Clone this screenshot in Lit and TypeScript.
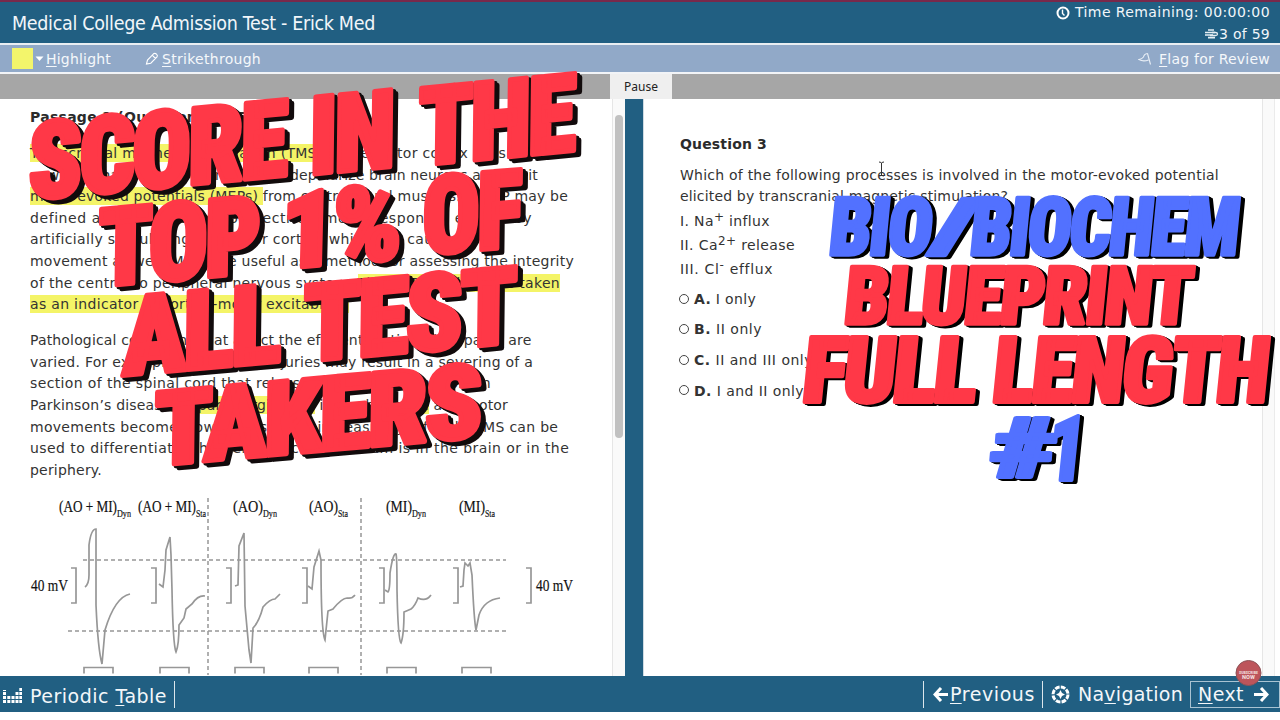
import { LitElement, html, svg, css } from "lit";
import { customElement, property } from "lit/decorators.js";

// One line of text, spaced out to an exact width
@customElement("fit-line")
export class FitLine extends LitElement {
    @property({ type: Number }) width = 0;

    static styles = css`
        :host {
            display: block;
            width: fit-content;
            white-space: nowrap;
        }
    `;

    firstUpdated() {
        const chars = (this.textContent || "").trim().length;
        const natural = this.getBoundingClientRect().width;
        if (this.width && chars) {
            this.style.letterSpacing = `${(this.width - natural) / chars}px`;
        }
    }

    render() {
        return html`<slot></slot>`;
    }
}

// text, left, baseline at left, right, baseline at right, cap height, lean, colour
type Word = [string, number, number, number, number, number, number, string];

const RED = "#ff3847";
const BLUE = "#5271ff";

const SLOGAN: Word[] = [
    ["SCORE", 28, 202, 285, 178, 81, 1, RED],
    ["IN", 309, 177, 392, 169, 82, 1, RED],
    ["THE", 418, 168, 573, 153, 82, 1, RED],
    ["TOP", 98, 289, 258, 275, 82, 1, RED],
    ["1%", 280, 271, 398, 261, 80, 2, RED],
    ["OF", 422, 257, 519, 249, 82, 1, RED],
    ["ALL", 122, 378, 278, 364, 83, 1, RED],
    ["TEST", 303, 364, 514, 345, 81, 1, RED],
    ["TAKERS", 154, 468, 479, 439, 78, 1, RED],
];

const HEADLINE: Word[] = [
    ["BIO", 827, 257, 928, 257, 61, 6, BLUE],
    ["/", 929, 253, 970, 253, 56, 7, BLUE],
    ["BIOCHEM", 968, 257, 1235, 257, 61, 6, BLUE],
    ["BLUEPRINT", 842, 326, 1188, 326, 61, 6, RED],
    ["FULL", 800, 404, 972, 404, 69, 7, RED],
    ["LENGTH", 990, 404, 1264, 404, 69, 7, RED],
    ["#", 988, 479, 1052, 479, 63, 5, BLUE],
    ["1", 1045, 482, 1080, 482, 68, 7, BLUE],
];

const CAP = 71.1;
const STROKE = 4.5;

const TRACES = [
    "M85 587 Q89 584 89 575 L89 545 Q91 529 96 529 L96 605 Q98 650 102 664 L105 630 Q115 597 130 594",
    "M159 584 L163 587 L165 570 L166 550 L170 537 L171 555 L172 590 Q173 645 176 652 Q179 645 179 625 L184 618 L186 609 L192 604 Q198 595 205 596",
    "M235 586 L238 585 L239 546 L244 533 L245 606 L249 650 L251 663 L253 628 Q259 622 263 607 Q270 599 275 599 L280 594",
    "M308 586 L312 589 L314 567 L319 551 L321 560 Q321 632 325 640 L328 611 L333 609 Q342 598 347 598 Q352 599 355 595",
    "M385 590 L388 592 Q390 590 390 573 Q393 553 396 554 Q397 556 397 590 Q398 640 401 643 Q404 635 404 612 L411 609 Q415 606 418 598 Q426 602 431 595",
    "M460 587 L463 586 L464 570 L465 563 L468 566 L470 563 L472 575 Q474 620 476 630 L479 615 Q484 600 500 598",
];

const LABELS: [number, string, string, number][] = [
    [59, "(AO + MI)", "Dyn", 58],
    [138, "(AO + MI)", "Sta", 58],
    [233, "(AO)", "Dyn", 30],
    [309, "(AO)", "Sta", 29],
    [386, "(MI)", "Dyn", 26],
    [459, "(MI)", "Sta", 26],
];

@customElement("app-root")
export class AppRoot extends LitElement {
    static styles = css`
        :host {
            display: flex;
            flex-direction: column;
            position: relative;
            width: 1280px;
            height: 720px;
            overflow: hidden;
            background: #fff;
            color: #333;
            font-family: "DejaVu Sans", Verdana, sans-serif;
            font-size: 14px;
        }

        u {
            text-underline-offset: 2px;
            text-decoration-thickness: 1px;
        }

        svg {
            display: block;
        }

        .header {
            box-sizing: border-box;
            height: 45px;
            display: flex;
            justify-content: space-between;
            padding: 0 10px 0 12px;
            background: #215f82;
            border-top: 2px solid #78294b;
            border-bottom: 2px solid #e9eef2;
            color: #f1f6fa;
        }

        .title {
            font-family: "DejaVu Sans Condensed", "DejaVu Sans", sans-serif;
            font-stretch: condensed;
            font-size: 19.5px;
            line-height: 44px;
        }

        .status {
            display: flex;
            flex-direction: column;
            align-items: flex-end;
            font-size: 14px;
            line-height: 21.5px;
        }

        .status div,
        .tools div,
        .footer div {
            display: flex;
            align-items: center;
        }

        .tools {
            box-sizing: border-box;
            height: 29px;
            display: flex;
            align-items: center;
            padding: 0 10px 0 12px;
            background: #91a9c8;
            border-bottom: 2px solid #f2f4f7;
            color: #f5f8fb;
        }

        .swatch {
            width: 21px;
            height: 21px;
            background: #f3f56b;
        }

        .strike {
            margin-left: 34px;
            gap: 3px;
        }

        .flag {
            margin-left: auto;
            gap: 7px;
        }

        .pausebar {
            height: 25px;
            display: flex;
            background: #a6a6a6;
        }

        .pause {
            display: flex;
            align-items: center;
            justify-content: center;
            width: 62px;
            margin-left: 610px;
            background: #efefef;
            color: #222;
            font-family: "Noto Sans", sans-serif;
            font-size: 12px;
        }

        .main {
            display: flex;
            height: 577px;
        }

        .passage {
            box-sizing: border-box;
            width: 612px;
            padding: 8px 0 0 30px;
            overflow: hidden;
            line-height: 21.6px;
        }

        .passage h3,
        .question h3 {
            margin: 0;
            font-size: 14px;
            line-height: 21px;
            color: #2b2b2b;
        }

        .para {
            margin-top: 15px;
        }

        .para + .para {
            margin-top: 14.5px;
        }

        mark {
            background: #f4f467;
            color: inherit;
            padding: 1px 0;
        }

        .figure {
            margin: 8.5px 0 0 -30px;
        }

        .figure path {
            fill: none;
            stroke: #979797;
            stroke-width: 1.7;
        }

        .figure .dash {
            stroke-dasharray: 4 3;
            stroke-width: 1.5;
        }

        .figure text {
            font-family: "Liberation Serif", serif;
            font-size: 17.5px;
            fill: #111;
            stroke: #111;
            stroke-width: 0.2px;
        }

        .figure .sub {
            font-size: 11px;
        }

        .track {
            box-sizing: border-box;
            width: 13px;
            padding: 16px 2px 0 2px;
            background: #fafafa;
            border-left: 1px solid #e6e6e6;
        }

        .thumb {
            width: 8px;
            height: 323px;
            border-radius: 4px;
            background: #c1c1c1;
        }

        .divider {
            width: 18px;
            background: #215f82;
            border-right: 1px solid #cfdbe3;
        }

        .question {
            flex: 1;
            padding: 35px 0 0 36px;
            line-height: 21.6px;
        }

        .stem {
            margin-top: 9.5px;
        }

        .roman {
            margin-top: 1px;
            line-height: 24.2px;
        }

        .roman sup {
            font-size: 12px;
            line-height: 0;
            vertical-align: 5px;
        }

        .choices {
            display: grid;
            grid-auto-rows: 30.6px;
            margin-top: 3px;
        }

        .choice {
            display: flex;
            align-items: center;
            gap: 5px;
            margin-left: -1px;
        }

        .radio {
            box-sizing: border-box;
            width: 10px;
            height: 10px;
            margin-top: -2px;
            border: 1.3px solid #444;
            border-radius: 50%;
        }

        .right {
            width: 13px;
            box-sizing: border-box;
            border-right: 1px solid #ebebeb;
            margin-right: 5px;
        }

        .footer {
            display: flex;
            align-items: center;
            height: 36px;
            background: #215f82;
            color: #f3f7fa;
            font-size: 19px;
        }

        .periodic {
            gap: 8px;
            height: 27px;
            padding: 3px 7px 0 3px;
            box-sizing: border-box;
            border-right: 1.5px solid #dce6ec;
        }

        .prev,
        .nav,
        .next {
            box-sizing: border-box;
            height: 27px;
            border-left: 1.5px solid #dce6ec;
        }

        .footer .prev {
            margin-left: auto;
            padding: 0 7px 0 9px;
            gap: 2px;
        }

        .nav {
            padding-left: 8px;
            gap: 8px;
        }

        .footer .next {
            width: 90px;
            margin-left: 7px;
            padding-left: 7px;
            gap: 10px;
            border: 1.5px solid #a9c3d2;
        }

        .overlay {
            position: absolute;
            left: 0;
            top: 0;
        }

        .overlay text {
            font-family: "Roboto", "Inter", sans-serif;
            font-stretch: condensed;
            font-weight: 900;
            font-size: 100px;
            letter-spacing: -3px;
            stroke-width: 4.5px;
            stroke-linejoin: round;
        }

        .slogan {
            filter: drop-shadow(3px 2px 0 #120b0c) drop-shadow(2px 2px 0 #120b0c);
        }

        .headline {
            filter: drop-shadow(2px 1.5px 0 #000) drop-shadow(2px 1.5px 0 #000);
        }

        .overlay .badge {
            font-size: 6px;
            font-weight: 700;
            letter-spacing: 0;
            fill: #f0dcdc;
            stroke: none;
        }

        .overlay .small {
            font-size: 4px;
        }
    `;

    private word([text, x1, y1, x2, y2, cap, lean, color]: Word) {
        const w = x2 - x1;
        const full = CAP + STROKE;
        const m = [1, (y2 - y1) / w, -lean / full, cap / full, x1, y1];
        return svg`<text transform="matrix(${m.join(" ")})" y=${-STROKE / 2} textLength=${w}
            lengthAdjust="spacingAndGlyphs" fill=${color} stroke=${color}>${text}</text>`;
    }

    private figure() {
        return html`
        <svg class="figure" width="612" height="186" viewBox="0 490 612 186">
            <path class="dash" d="M83 560H506 M68 631H506 M208 498V675 M361 498V675"></path>
            ${TRACES.map((d) => svg`<path d=${d}></path>`)}
            ${[71, 151, 226, 302, 379, 453, 526].map((x) => svg`<path d="M${x} 568h5v35h-5"></path>`)}
            ${[84, 160, 235, 309, 387, 462].map((x) => svg`<path d="M${x} 673.5v-6h29v6"></path>`)}
            ${LABELS.map(([x, main, sub, w]) => svg`
                <text x=${x} y="512" textLength=${w} lengthAdjust="spacingAndGlyphs">${main}</text>
                <text class="sub" x=${x + w} y="516.5" textLength=${sub === "Dyn" ? 14 : 10} lengthAdjust="spacingAndGlyphs">${sub}</text>`)}
            <text x="31" y="591" textLength="37" lengthAdjust="spacingAndGlyphs">40 mV</text>
            <text x="536" y="591" textLength="37" lengthAdjust="spacingAndGlyphs">40 mV</text>
        </svg>`;
    }

    private choice(letter: string, text: string, width: number) {
        return html`
        <div class="choice">
            <span class="radio"></span>
            <fit-line width=${width}><b>${letter}.</b> ${text}</fit-line>
        </div>`;
    }

    render() {
        return html`
        <div class="header">
            <fit-line class="title" width="363">Medical College Admission Test - Erick Med</fit-line>
            <div class="status">
                <div>
                    <svg width="19" height="14" viewBox="0 0 19 14" fill="none" stroke="#fff">
                        <circle cx="7" cy="7" r="5.5" stroke-width="2"></circle>
                        <path d="M6.5 3.5V7.5L8.5 9.5" stroke-width="1.4"></path>
                    </svg>
                    <fit-line width="195">Time Remaining: 00:00:00</fit-line>
                </div>
                <div>
                    <svg width="15" height="12" viewBox="0 0 15 12" fill="none" stroke="#e6eef3">
                        <path d="M4 2H10 M1 4.5H11 M1 7H9 M4 9.7H11" stroke-width="1.7"></path>
                        <path d="M8 4.5H11.5Q13.5 4.5 13.5 6T11.5 7.5H6" stroke-width="1.3"></path>
                    </svg>
                    <fit-line width="51">3 of 59</fit-line>
                </div>
            </div>
        </div>
        <div class="tools">
            <div>
                <span class="swatch"></span>
                <svg width="13" height="8" viewBox="0 0 13 8"><path d="M2.5 1.5H10.5L6.5 6Z" fill="#fff"></path></svg>
                <fit-line width="65"><u>H</u>ighlight</fit-line>
            </div>
            <div class="strike">
                <svg width="14" height="14" viewBox="0 0 14 14" fill="none" stroke="#fff" stroke-width="1.1">
                    <path d="M1.5 12L2.5 8L8.5 1.8Q10 .8 11.5 2.2T12 5L5.8 11.2Z M7.2 3.2L10.5 6.500"></path>
                </svg>
                <fit-line width="99"><u>S</u>trikethrough</fit-line>
            </div>
            <div class="flag">
                <svg width="14" height="14" viewBox="0 0 14 14" fill="none" stroke="#e9eff6" stroke-width="1.1">
                    <path d="M9.5 1.5L12.5 12.5 M9.5 1.5Q6 2 5.5 5Q4 7 1 7.5Q5 10 10.5 8"></path>
                </svg>
                <fit-line width="111"><u>F</u>lag for Review</fit-line>
            </div>
        </div>
        <div class="pausebar"><div class="pause">Pause</div></div>
        <div class="main">
            <div class="passage">
                <h3><fit-line width="224">Passage 1 (Questions 1 - 5)</fit-line></h3>
                <div class="para">
                    <fit-line width="476"><mark>Transcranial magnetic stimulation (TMS)</mark> of the motor cortex uses</fit-line>
                    <fit-line width="508">powerful magnetic fields in order to depolarize brain neurons and elicit</fit-line>
                    <fit-line width="538"><mark>motor-evoked potentials (MEPs) </mark>from contralateral muscles. A MEP may be</fit-line>
                    <fit-line width="502">defined as the magnitude of electrical motor responses evoked by</fit-line>
                    <fit-line width="420">artificially stimulating the motor cortex, which can cause</fit-line>
                    <fit-line width="544">movement as well. MEPs are useful as a method for assessing the integrity</fit-line>
                    <fit-line width="530">of the central to peripheral nervous system. <mark>The MEP amplitude is taken</mark></fit-line>
                    <fit-line width="319"><mark>as an indicator of cortico-motor excitability.</mark></fit-line>
                </div>
                <div class="para">
                    <fit-line width="501">Pathological conditions that affect the efferent corticospinal paths are</fit-line>
                    <fit-line width="503">varied. For example, spinal cord injuries may result in a severing of a</fit-line>
                    <fit-line width="461">section of the spinal cord that relays the motor information. In</fit-line>
                    <fit-line width="478">Parkinson’s disease, <mark>dopaminergic cells</mark> in the brain <mark>die</mark> and motor</fit-line>
                    <fit-line width="528">movements become slow, clumsy, and increasingly difficult. TMS can be</fit-line>
                    <fit-line width="539">used to differentiate whether the actual problem is in the brain or in the</fit-line>
                    <fit-line width="72">periphery.</fit-line>
                </div>
                ${this.figure()}
            </div>
            <div class="track"><div class="thumb"></div></div>
            <div class="divider"></div>
            <div class="question">
                <h3><fit-line width="87">Question 3</fit-line></h3>
                <div class="stem">
                    <fit-line width="539">Which of the following processes is involved in the motor-evoked potential</fit-line>
                    <fit-line width="328">elicited by transcranial magnetic stimulation?</fit-line>
                </div>
                <div class="roman">
                    <fit-line width="90">I. Na<sup>+</sup> influx</fit-line>
                    <fit-line width="115">II. Ca<sup>2+</sup> release</fit-line>
                    <fit-line width="93">III. Cl<sup>-</sup> efflux</fit-line>
                </div>
                <div class="choices">
                    ${this.choice("A", "I only", 62)}
                    ${this.choice("B", "II only", 68)}
                    ${this.choice("C", "II and III only", 119)}
                    ${this.choice("D", "I and II only", 110)}
                </div>
            </div>
            <div class="track right"></div>
        </div>
        <div class="footer">
            <div class="periodic">
                <svg width="19" height="17" viewBox="0 0 19 17" stroke="#fff" stroke-width="3" stroke-dasharray="3 1">
                    <path d="M1.5 16V3 M5.8 16V8 M10 16V8 M14 16V5 M17.8 16V1"></path>
                </svg>
                <fit-line width="137">Periodic <u>T</u>able</fit-line>
            </div>
            <div class="prev">
                <svg width="15" height="15" viewBox="0 0 15 15" fill="none" stroke="#fff" stroke-width="3"><path d="M8 1L2 7.5L8 14 M2 7.5H15"></path></svg>
                <fit-line width="85"><u>P</u>revious</fit-line>
            </div>
            <div class="nav">
                <svg width="19" height="19" viewBox="0 0 19 19" fill="none" stroke="#fff">
                    <circle cx="9.5" cy="9.5" r="7.5" stroke-width="3" stroke-dasharray="4.7 1.2"></circle>
                    <path d="M9.5 5L11 8L14 9.5L11 11L9.5 14L8 11L5 9.5L8 8Z" fill="#fff" stroke="none"></path>
                </svg>
                <fit-line width="105">Na<u>v</u>igation</fit-line>
            </div>
            <div class="next">
                <fit-line width="46"><u>N</u>ext</fit-line>
                <svg width="15" height="15" viewBox="0 0 15 15" fill="none" stroke="#fff" stroke-width="3"><path d="M7 1L13 7.5L7 14 M13 7.5H0"></path></svg>
            </div>
        </div>
        <svg class="overlay" width="1280" height="720" viewBox="0 0 1280 720">
            <path d="M879 162q2.5 0 2.5 1.5q0-1.5 2.5-1.5 M881.5 163v12 M879 176q2.5 0 2.5-1.5q0 1.5 2.5 1.5" fill="none" stroke="#333"></path>
            <g class="slogan">${SLOGAN.map((w) => this.word(w))}</g>
            <g class="headline">${HEADLINE.map((w) => this.word(w))}</g>
            <circle cx="1248.5" cy="673" r="12.5" fill="#bd555b" stroke="#8c5358"></circle>
            <text class="badge small" x="1239" y="673.5" textLength="19" lengthAdjust="spacingAndGlyphs">SUBSCRIBE</text>
            <text class="badge" x="1242" y="679" textLength="13" lengthAdjust="spacingAndGlyphs">NOW</text>
        </svg>
        `;
    }
}
